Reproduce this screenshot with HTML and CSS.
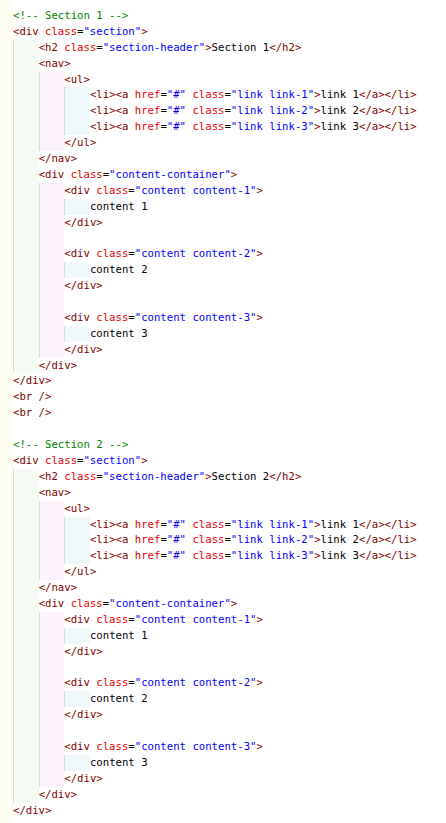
FILE: index.html
```html
<!DOCTYPE html>
<html>
<head>
<meta charset="utf-8">
<link rel="stylesheet" href="styles.css">
</head>
<body>
<div class="editor">
<div class="ln"><span class="g g1"></span><span class="code"><span class="c">&lt;!-- Section 1 --&gt;</span></span></div>
<div class="ln"><span class="g g1"></span><span class="code"><span class="t">&lt;div</span> <span class="a">class</span>=<span class="s">"section"</span><span class="t">&gt;</span></span></div>
<div class="ln"><span class="g g1"></span><span class="g g2"></span><span class="code"><span class="t">&lt;h2</span> <span class="a">class</span>=<span class="s">"section-header"</span><span class="t">&gt;</span>Section 1<span class="t">&lt;/h2&gt;</span></span></div>
<div class="ln"><span class="g g1"></span><span class="g g2"></span><span class="code"><span class="t">&lt;nav&gt;</span></span></div>
<div class="ln"><span class="g g1"></span><span class="g g2"></span><span class="g g3"></span><span class="code"><span class="t">&lt;ul&gt;</span></span></div>
<div class="ln"><span class="g g1"></span><span class="g g2"></span><span class="g g3"></span><span class="g g4"></span><span class="code"><span class="t">&lt;li&gt;&lt;a</span> <span class="a">href</span>=<span class="s">"#"</span> <span class="a">class</span>=<span class="s">"link link-1"</span><span class="t">&gt;</span>link 1<span class="t">&lt;/a&gt;&lt;/li&gt;</span></span></div>
<div class="ln"><span class="g g1"></span><span class="g g2"></span><span class="g g3"></span><span class="g g4"></span><span class="code"><span class="t">&lt;li&gt;&lt;a</span> <span class="a">href</span>=<span class="s">"#"</span> <span class="a">class</span>=<span class="s">"link link-2"</span><span class="t">&gt;</span>link 2<span class="t">&lt;/a&gt;&lt;/li&gt;</span></span></div>
<div class="ln"><span class="g g1"></span><span class="g g2"></span><span class="g g3"></span><span class="g g4"></span><span class="code"><span class="t">&lt;li&gt;&lt;a</span> <span class="a">href</span>=<span class="s">"#"</span> <span class="a">class</span>=<span class="s">"link link-3"</span><span class="t">&gt;</span>link 3<span class="t">&lt;/a&gt;&lt;/li&gt;</span></span></div>
<div class="ln"><span class="g g1"></span><span class="g g2"></span><span class="g g3"></span><span class="code"><span class="t">&lt;/ul&gt;</span></span></div>
<div class="ln"><span class="g g1"></span><span class="g g2"></span><span class="code"><span class="t">&lt;/nav&gt;</span></span></div>
<div class="ln"><span class="g g1"></span><span class="g g2"></span><span class="code"><span class="t">&lt;div</span> <span class="a">class</span>=<span class="s">"content-container"</span><span class="t">&gt;</span></span></div>
<div class="ln"><span class="g g1"></span><span class="g g2"></span><span class="g g3"></span><span class="code"><span class="t">&lt;div</span> <span class="a">class</span>=<span class="s">"content content-1"</span><span class="t">&gt;</span></span></div>
<div class="ln"><span class="g g1"></span><span class="g g2"></span><span class="g g3"></span><span class="g g4"></span><span class="code">content 1</span></div>
<div class="ln"><span class="g g1"></span><span class="g g2"></span><span class="g g3"></span><span class="code"><span class="t">&lt;/div&gt;</span></span></div>
<div class="ln"><span class="g g1"></span><span class="g g2"></span><span class="g g3"></span><span class="code"></span></div>
<div class="ln"><span class="g g1"></span><span class="g g2"></span><span class="g g3"></span><span class="code"><span class="t">&lt;div</span> <span class="a">class</span>=<span class="s">"content content-2"</span><span class="t">&gt;</span></span></div>
<div class="ln"><span class="g g1"></span><span class="g g2"></span><span class="g g3"></span><span class="g g4"></span><span class="code">content 2</span></div>
<div class="ln"><span class="g g1"></span><span class="g g2"></span><span class="g g3"></span><span class="code"><span class="t">&lt;/div&gt;</span></span></div>
<div class="ln"><span class="g g1"></span><span class="g g2"></span><span class="g g3"></span><span class="code"></span></div>
<div class="ln"><span class="g g1"></span><span class="g g2"></span><span class="g g3"></span><span class="code"><span class="t">&lt;div</span> <span class="a">class</span>=<span class="s">"content content-3"</span><span class="t">&gt;</span></span></div>
<div class="ln"><span class="g g1"></span><span class="g g2"></span><span class="g g3"></span><span class="g g4"></span><span class="code">content 3</span></div>
<div class="ln"><span class="g g1"></span><span class="g g2"></span><span class="g g3"></span><span class="code"><span class="t">&lt;/div&gt;</span></span></div>
<div class="ln"><span class="g g1"></span><span class="g g2"></span><span class="code"><span class="t">&lt;/div&gt;</span></span></div>
<div class="ln"><span class="g g1"></span><span class="code"><span class="t">&lt;/div&gt;</span></span></div>
<div class="ln"><span class="g g1"></span><span class="code"><span class="t">&lt;br /&gt;</span></span></div>
<div class="ln"><span class="g g1"></span><span class="code"><span class="t">&lt;br /&gt;</span></span></div>
<div class="ln"><span class="g g1"></span><span class="code"></span></div>
<div class="ln"><span class="g g1"></span><span class="code"><span class="c">&lt;!-- Section 2 --&gt;</span></span></div>
<div class="ln"><span class="g g1"></span><span class="code"><span class="t">&lt;div</span> <span class="a">class</span>=<span class="s">"section"</span><span class="t">&gt;</span></span></div>
<div class="ln"><span class="g g1"></span><span class="g g2"></span><span class="code"><span class="t">&lt;h2</span> <span class="a">class</span>=<span class="s">"section-header"</span><span class="t">&gt;</span>Section 2<span class="t">&lt;/h2&gt;</span></span></div>
<div class="ln"><span class="g g1"></span><span class="g g2"></span><span class="code"><span class="t">&lt;nav&gt;</span></span></div>
<div class="ln"><span class="g g1"></span><span class="g g2"></span><span class="g g3"></span><span class="code"><span class="t">&lt;ul&gt;</span></span></div>
<div class="ln"><span class="g g1"></span><span class="g g2"></span><span class="g g3"></span><span class="g g4"></span><span class="code"><span class="t">&lt;li&gt;&lt;a</span> <span class="a">href</span>=<span class="s">"#"</span> <span class="a">class</span>=<span class="s">"link link-1"</span><span class="t">&gt;</span>link 1<span class="t">&lt;/a&gt;&lt;/li&gt;</span></span></div>
<div class="ln"><span class="g g1"></span><span class="g g2"></span><span class="g g3"></span><span class="g g4"></span><span class="code"><span class="t">&lt;li&gt;&lt;a</span> <span class="a">href</span>=<span class="s">"#"</span> <span class="a">class</span>=<span class="s">"link link-2"</span><span class="t">&gt;</span>link 2<span class="t">&lt;/a&gt;&lt;/li&gt;</span></span></div>
<div class="ln"><span class="g g1"></span><span class="g g2"></span><span class="g g3"></span><span class="g g4"></span><span class="code"><span class="t">&lt;li&gt;&lt;a</span> <span class="a">href</span>=<span class="s">"#"</span> <span class="a">class</span>=<span class="s">"link link-3"</span><span class="t">&gt;</span>link 3<span class="t">&lt;/a&gt;&lt;/li&gt;</span></span></div>
<div class="ln"><span class="g g1"></span><span class="g g2"></span><span class="g g3"></span><span class="code"><span class="t">&lt;/ul&gt;</span></span></div>
<div class="ln"><span class="g g1"></span><span class="g g2"></span><span class="code"><span class="t">&lt;/nav&gt;</span></span></div>
<div class="ln"><span class="g g1"></span><span class="g g2"></span><span class="code"><span class="t">&lt;div</span> <span class="a">class</span>=<span class="s">"content-container"</span><span class="t">&gt;</span></span></div>
<div class="ln"><span class="g g1"></span><span class="g g2"></span><span class="g g3"></span><span class="code"><span class="t">&lt;div</span> <span class="a">class</span>=<span class="s">"content content-1"</span><span class="t">&gt;</span></span></div>
<div class="ln"><span class="g g1"></span><span class="g g2"></span><span class="g g3"></span><span class="g g4"></span><span class="code">content 1</span></div>
<div class="ln"><span class="g g1"></span><span class="g g2"></span><span class="g g3"></span><span class="code"><span class="t">&lt;/div&gt;</span></span></div>
<div class="ln"><span class="g g1"></span><span class="g g2"></span><span class="g g3"></span><span class="code"></span></div>
<div class="ln"><span class="g g1"></span><span class="g g2"></span><span class="g g3"></span><span class="code"><span class="t">&lt;div</span> <span class="a">class</span>=<span class="s">"content content-2"</span><span class="t">&gt;</span></span></div>
<div class="ln"><span class="g g1"></span><span class="g g2"></span><span class="g g3"></span><span class="g g4"></span><span class="code">content 2</span></div>
<div class="ln"><span class="g g1"></span><span class="g g2"></span><span class="g g3"></span><span class="code"><span class="t">&lt;/div&gt;</span></span></div>
<div class="ln"><span class="g g1"></span><span class="g g2"></span><span class="g g3"></span><span class="code"></span></div>
<div class="ln"><span class="g g1"></span><span class="g g2"></span><span class="g g3"></span><span class="code"><span class="t">&lt;div</span> <span class="a">class</span>=<span class="s">"content content-3"</span><span class="t">&gt;</span></span></div>
<div class="ln"><span class="g g1"></span><span class="g g2"></span><span class="g g3"></span><span class="g g4"></span><span class="code">content 3</span></div>
<div class="ln"><span class="g g1"></span><span class="g g2"></span><span class="g g3"></span><span class="code"><span class="t">&lt;/div&gt;</span></span></div>
<div class="ln"><span class="g g1"></span><span class="g g2"></span><span class="code"><span class="t">&lt;/div&gt;</span></span></div>
<div class="ln"><span class="g g1"></span><span class="code"><span class="t">&lt;/div&gt;</span></span></div>
</div>
</body>
</html>
```
FILE: styles.css
```css
html, body {
  margin: 0;
  padding: 0;
  background: #ffffff;
}

.editor {
  min-height: 100vh;
  box-sizing: border-box;
  padding-top: 8px;
  background: linear-gradient(90deg, #fefef0 0, #fefef0 13px, #ffffff 13px);
  font-family: "DejaVu Sans Mono", "Liberation Mono", monospace;
  font-size: 10.65px;
  line-height: 15.9px;
  color: #000000;
}

.ln {
  display: flex;
  height: 15.9px;
  white-space: pre;
}

.g {
  flex: none;
  height: 100%;
  box-sizing: border-box;
}

.g1 {
  width: 13px;
  background: #fefef0;
}

.g2 {
  width: 25.65px;
  background: #f3fbf3;
  border-left: 1px solid #dadada;
}

.g3 {
  width: 25.65px;
  background: #fcf2fb;
  border-left: 1px solid #dadada;
}

.g4 {
  width: 25.65px;
  background: #eff9fc;
  border-left: 1px solid #dadada;
}

.code {
  flex: none;
}

.t { color: #800000; }
.a { color: #e50000; }
.s { color: #0000ff; }
.c { color: #008000; }
```
